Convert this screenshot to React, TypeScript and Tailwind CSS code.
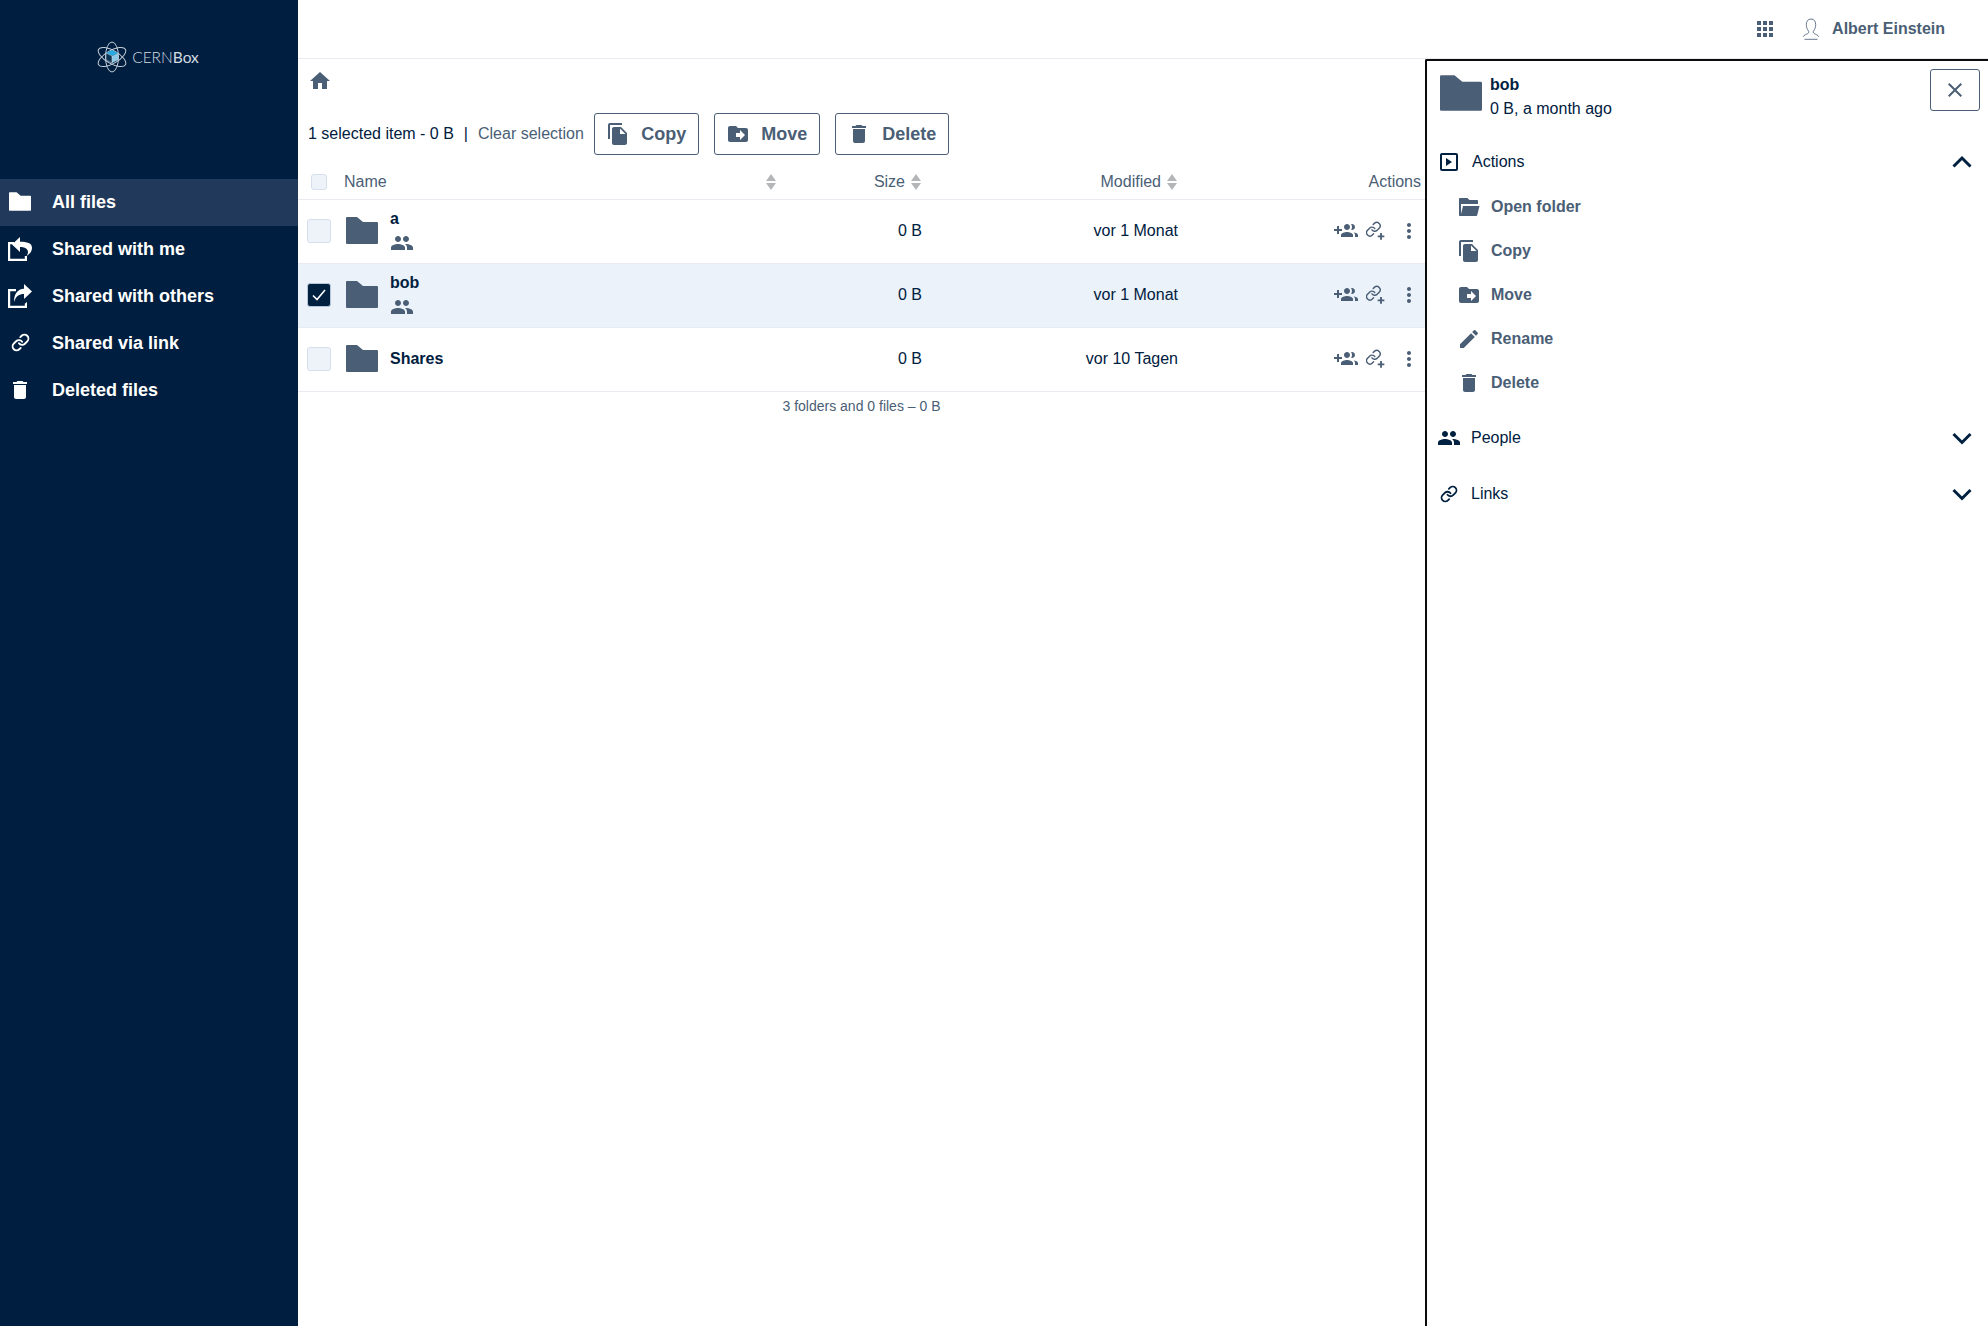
import React from "react";
import { MdHome, MdFileCopy, MdDelete, MdPeople, MdMoreVert, MdApps, MdEdit, MdClose, MdDriveFileMove } from "react-icons/md";
import { RiFolderOpenFill } from "react-icons/ri";

const Folder = ({ className }: { className?: string }) => (
  <svg viewBox="0 0 32 27" className={className} fill="currentColor">
    <path d="M0 1Q0 0 1 0H11L17 5H31Q32 5 32 6V26Q32 27 31 27H1Q0 27 0 26Z" />
  </svg>
);

const LinkIcon = ({ className }: { className?: string }) => (
  <svg viewBox="0 0 24 24" className={className} fill="none" stroke="currentColor" strokeWidth="2.4" strokeLinecap="round" strokeLinejoin="round">
    <path d="M10 13a5 5 0 0 0 7.54.54l3-3a5 5 0 0 0-7.07-7.07l-1.72 1.71" />
    <path d="M14 11a5 5 0 0 0-7.54-.54l-3 3a5 5 0 0 0 7.07 7.07l1.71-1.71" />
  </svg>
);

const AddLink = ({ className }: { className?: string }) => (
  <svg viewBox="0 0 24 24" className={className} fill="none" stroke="currentColor" strokeLinecap="round" strokeLinejoin="round">
    <g strokeWidth="2.100" transform="translate(-1 0) scale(0.82)">
      <path d="M10 13a5 5 0 0 0 7.54.54l3-3a5 5 0 0 0-7.07-7.07l-1.72 1.71" />
      <path d="M14 11a5 5 0 0 0-7.54-.54l-3 3a5 5 0 0 0 7.07 7.07l1.71-1.71" />
    </g>
    <path d="M18 14.500v8M14 18.500h8" strokeWidth="2.200" strokeLinecap="butt" />
  </svg>
);

const GroupAdd = ({ className }: { className?: string }) => (
  <svg viewBox="0 0 24 24" className={className} fill="currentColor">
    <path d="M8 10H5V7H3v3H0v2h3v3h2v-3h3v-2zm10 1c1.66 0 2.99-1.34 2.99-3S19.66 5 18 5c-.32 0-.63.05-.91.14.57.81.9 1.79.9 2.86s-.34 2.04-.9 2.86c.28.09.59.14.91.14zm-5 0c1.66 0 2.99-1.34 2.99-3S14.660 5 13 5s-3 1.34-3 3 1.34 3 3 3zm6.62 2.16c.83.73 1.38 1.66 1.38 2.840V18h3v-2c0-1.54-2.370-2.490-4.380-2.840zM13 13c-2 0-6 1-6 3v2h12v-2c0-2-4-3-6-3z" />
  </svg>
);

const Chevron = ({ up }: { up?: boolean }) => (
  <svg viewBox="0 0 24 24" className="w-[24px] h-[24px] ml-auto shrink-0" fill="none" stroke="#002040" strokeWidth="3">
    <path d={up ? "M3.500 16.500L12 8l8.500 8.500" : "M3.500 8L12 16.500 20.500 8"} />
  </svg>
);

const SharedWithMe = ({ className }: { className?: string }) => (
  <svg viewBox="0 0 24 24" className={className} fill="currentColor">
    <path d="M6 5H0v19h19v-5h-2.200v2.800H2.200V7.200H6z" />
    <path d="M12 0 4 7.500l8 7.500V10c4 0 7 1 8 4.500.1 1.500-.5 3-1.500 4.500C22 17 24 14 24 11 24 6 19 4.800 12 4.800z" />
  </svg>
);

const SharedWithOthers = ({ className }: { className?: string }) => (
  <svg viewBox="0 0 24 24" className={className} fill="currentColor">
    <path d="M8 5H0v19h19v-6l-2.200 1.800v2H2.200V7.200H8z" />
    <path d="M16 0l8 7.500-8 7.500v-5c-5 0-8 2-10 8C6 10 9.500 5 16 4.800z" />
  </svg>
);

const SortIcon = () => (
  <svg viewBox="0 0 10 16" className="w-[10px] h-[16px] shrink-0" fill="#b4b6b8">
    <path d="M5 0l5 7H0zM5 16l5-7H0z" />
  </svg>
);

const UserIcon = ({ className }: { className?: string }) => (
  <svg viewBox="0 0 18 22" className={className} fill="none" stroke="#56687e" strokeWidth="0.9">
    <path d="M9 1C5.800 1 4.300 3.500 4.300 6.500c0 2.800 1 5 2.200 6.500.5.700.3 2-.6 2.500C4.500 16.300 2 17 1.200 18.800" />
    <path d="M9 1c3.200 0 4.700 2.500 4.700 5.500 0 2.800-1 5-2.200 6.500-.5.700-.3 2 .6 2.500 1.400.8 3.900 1.500 4.700 3.300" />
    <path d="M2.500 21.300h13" />
  </svg>
);

const Atom = () => (
  <svg viewBox="0 0 30 32" className="w-[30px] h-[32px] shrink-0">
    <g fill="none" stroke="#c3ced8" strokeWidth="1">
      <ellipse cx="15" cy="16" rx="6.500" ry="15" />
      <ellipse cx="15" cy="16" rx="6.500" ry="15.500" transform="rotate(60 15 16)" />
      <ellipse cx="15" cy="16" rx="6.500" ry="15.500" transform="rotate(-60 15 16)" />
    </g>
    <path d="M15 9l6 3-6 3-6-3z" fill="#29a9df" />
    <path d="M15 15l6-3v7l-6 3z" fill="#8fc9e8" />
    <path d="M15 15l-6-3v7l6 3z" fill="#0d3352" stroke="#c3ced8" strokeWidth="0.6" />
  </svg>
);

const navItems = [
  { label: "All files", icon: <Folder className="w-[22px] h-[19px]" />, active: true },
  { label: "Shared with me", icon: <SharedWithMe className="w-[24px] h-[24px]" /> },
  { label: "Shared with others", icon: <SharedWithOthers className="w-[24px] h-[24px]" /> },
  { label: "Shared via link", icon: <LinkIcon className="w-[19px] h-[19px]" /> },
  { label: "Deleted files", icon: <MdDelete className="w-[24px] h-[24px]" /> },
];

const Checkbox = ({ checked }: { checked?: boolean }) =>
  checked ? (
    <div className="w-[24px] h-[24px] rounded-[3px] bg-[#002040] border border-[#b7c6d6] flex items-center justify-center shrink-0">
      <svg viewBox="0 0 16 16" className="w-[16px] h-[16px]" fill="none" stroke="#fff" strokeWidth="1.6">
        <path d="M2 8.500l4 4 8-9.500" />
      </svg>
    </div>
  ) : (
    <div className="w-[24px] h-[24px] rounded-[3px] bg-[#eef3f9] border border-[#d5e0ec] shrink-0" />
  );

const rows = [
  { name: "a", date: "vor 1 Monat", shared: true },
  { name: "bob", date: "vor 1 Monat", shared: true, selected: true },
  { name: "Shares", date: "vor 10 Tagen" },
];

const ToolButton = ({ icon, label, w }: { icon: React.ReactNode; label: string; w: string }) => (
  <button className={`${w} h-[42px] border border-[#4a5e75] rounded-[3px] flex items-center justify-center gap-[11px] text-[18px] font-bold text-[#4a5e75]`}>
    {icon}
    <span>{label}</span>
  </button>
);

const PanelAction = ({ icon, label }: { icon: React.ReactNode; label: string }) => (
  <div className="h-[44px] flex items-center pl-[30px] text-[#4a5e75] font-bold text-[16px]">
    <span className="w-[24px] h-[24px] flex items-center justify-center shrink-0">{icon}</span>
    <span className="ml-[10px]">{label}</span>
  </div>
);

export default function App() {
  return (
    <div className="flex h-screen min-h-[1326px] bg-white text-[16px] text-[#002040] font-['Liberation_Sans',Arial,sans-serif] overflow-hidden">
      <aside className="w-[298px] shrink-0 bg-[#001f40] text-white flex flex-col">
        <div className="h-[179px] flex justify-center pt-[41px] pr-[2px]">
          <div className="flex items-start gap-[5px] h-[32px]">
            <Atom />
            <div className="text-[15.500px] leading-[32px] font-['Lato',sans-serif] text-[#d5dce3]">
              <span className="font-light">CERN</span>
              <span className="font-normal">Box</span>
            </div>
          </div>
        </div>
        <nav className="flex flex-col">
          {navItems.map((n) => (
            <div key={n.label} className={`h-[47px] pb-[2px] flex items-center ${n.active ? "bg-[#21395a]" : ""}`}>
              <span className="w-[40px] flex items-center justify-center shrink-0">{n.icon}</span>
              <span className="ml-[12px] text-[18px] font-bold leading-none">{n.label}</span>
            </div>
          ))}
        </nav>
      </aside>

      <div className="flex-1 flex flex-col min-w-0">
        <header className="h-[59px] shrink-0 border-b border-[#e8ebef] flex items-center justify-end pr-[43px] text-[#4a5e75]">
          <MdApps className="w-[24px] h-[24px] mr-[25px]" />
          <UserIcon className="w-[18px] h-[22px] mr-[12px]" />
          <span className="font-bold">Albert Einstein</span>
        </header>

        <div className="flex-1 flex min-h-0">
          <main className="flex-1 min-w-0 flex flex-col">
            <div className="h-[45px] pb-[2px] shrink-0 flex items-center pl-[10px] text-[#4a5e75]">
              <MdHome className="w-[24px] h-[24px]" />
            </div>
            <div className="h-[51px] shrink-0 pt-[9px] pl-[10px] flex items-start">
              <div className="h-[42px] flex items-center whitespace-nowrap">
                <span>1 selected item - 0 B</span>
                <span className="ml-[10px] mr-[10px]">|</span>
                <span className="text-[#4a5e75]">Clear selection</span>
              </div>
              <div className="flex gap-[15px] ml-[10px]">
                <ToolButton w="w-[105px]" label="Copy" icon={<MdFileCopy className="w-[24px] h-[24px]" />} />
                <ToolButton w="w-[106px]" label="Move" icon={<MdDriveFileMove className="w-[24px] h-[24px]" />} />
                <ToolButton w="w-[114px]" label="Delete" icon={<MdDelete className="w-[24px] h-[24px]" />} />
              </div>
            </div>
            <div className="h-[45px] pt-[10px] shrink-0 border-b border-[#e8ebef] grid grid-cols-[624px_256px_1fr] items-center text-[#4a5e75]">
              <div className="flex items-center relative h-[34px]">
                <div className="w-[16px] h-[16px] ml-[13px] rounded-[3px] bg-[#eef3f9] border border-[#d5e0ec]" />
                <span className="ml-[17px]">Name</span>
                <span className="ml-auto flex items-center gap-[6px] pr-[1px]">
                  <span className="mr-[92px]"><SortIcon /></span>
                  <span>Size</span>
                  <SortIcon />
                </span>
              </div>
              <div className="flex items-center justify-end gap-[6px] pr-[1px]">
                <span>Modified</span>
                <SortIcon />
              </div>
              <div className="text-right pr-[4px]">Actions</div>
            </div>
            {rows.map((r) => (
              <div key={r.name} className={`h-[64px] pb-[2px] shrink-0 border-b border-[#e8ebef] grid grid-cols-[624px_256px_1fr] items-center ${r.selected ? "bg-[#ebf2f9]" : ""}`}>
                <div className="flex items-center">
                  <div className="ml-[9px]"><Checkbox checked={r.selected} /></div>
                  <Folder className="w-[32px] h-[27px] ml-[15px] text-[#4a5e75] shrink-0" />
                  <div className="ml-[12px] flex flex-col">
                    <span className="font-bold leading-[24px]">{r.name}</span>
                    {r.shared && <MdPeople className="w-[24px] h-[24px] text-[#4a5e75]" />}
                  </div>
                  <span className="ml-auto">0 B</span>
                </div>
                <div className="text-right">{r.date}</div>
                <div className="flex items-center justify-end pr-[4px] text-[#4a5e75]">
                  <GroupAdd className="w-[24px] h-[24px]" />
                  <AddLink className="w-[20px] h-[20px] ml-[8px]" />
                  <MdMoreVert className="w-[24px] h-[24px] ml-[11px]" />
                </div>
              </div>
            ))}
            <div className="text-center text-[14px] text-[#4a5e75] mt-[4px]">3 folders and 0 files – 0 B</div>
          </main>

          <section className="w-[563px] shrink-0 border-l-2 border-t-2 border-[#0b0b0b] rounded-tl-[2px] flex flex-col">
            <div className="flex items-start pt-[8px] pl-[13px] pr-[8px] h-[79px] shrink-0">
              <Folder className="w-[42px] h-[36px] mt-[6px] text-[#4a5e75] shrink-0" />
              <div className="ml-[8px] mt-[4px] leading-[24px]">
                <div className="font-bold">bob</div>
                <div>0 B, a month ago</div>
              </div>
              <button className="ml-auto w-[50px] h-[42px] border border-[#4a5e75] rounded-[3px] flex items-center justify-center text-[#4a5e75]">
                <MdClose className="w-[24px] h-[24px]" />
              </button>
            </div>
            <div className="h-[44px] mb-px shrink-0 flex items-center pl-[13px] pr-[14px]">
              <span className="w-[18px] h-[18px] border-2 border-[#002040] rounded-[2px] flex items-center justify-center shrink-0">
                <svg viewBox="0 0 6 8" className="w-[6px] h-[8px]" fill="#002040"><path d="M0 0l6 4-6 4z" /></svg>
              </span>
              <span className="ml-[14px]">Actions</span>
              <Chevron up />
            </div>
            <PanelAction label="Open folder" icon={<RiFolderOpenFill className="w-[24px] h-[24px]" />} />
            <PanelAction label="Copy" icon={<MdFileCopy className="w-[24px] h-[24px]" />} />
            <PanelAction label="Move" icon={<MdDriveFileMove className="w-[24px] h-[24px]" />} />
            <PanelAction label="Rename" icon={<MdEdit className="w-[24px] h-[24px]" />} />
            <PanelAction label="Delete" icon={<MdDelete className="w-[24px] h-[24px]" />} />
            <div className="h-[56px] mt-[5px] shrink-0 flex items-center pl-[10px] pr-[14px]">
              <MdPeople className="w-[24px] h-[24px] shrink-0" />
              <span className="ml-[10px]">People</span>
              <Chevron />
            </div>
            <div className="h-[56px] shrink-0 flex items-center pl-[13px] pr-[14px]">
              <LinkIcon className="w-[18px] h-[18px] shrink-0" />
              <span className="ml-[13px]">Links</span>
              <Chevron />
            </div>
          </section>
        </div>
      </div>
    </div>
  );
}
